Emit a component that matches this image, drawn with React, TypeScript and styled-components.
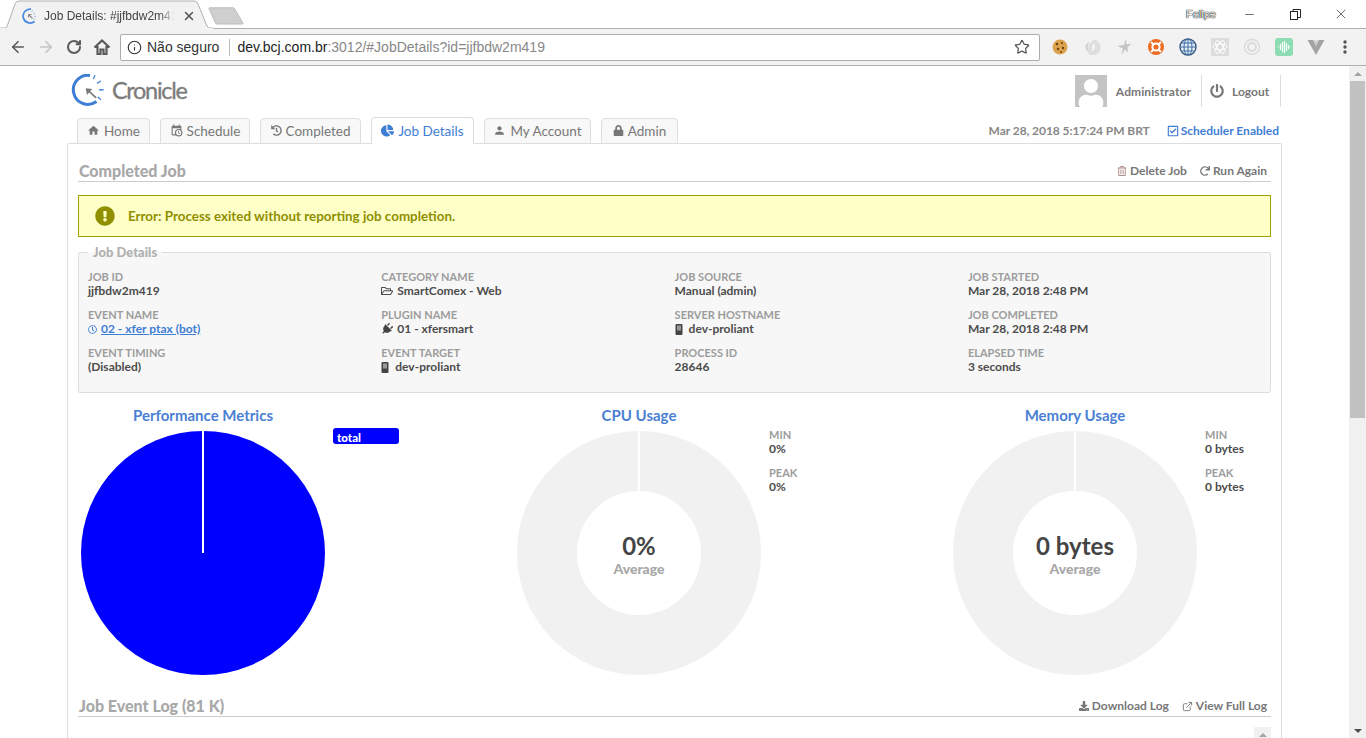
import React from 'react';
import styled, { createGlobalStyle } from 'styled-components';
import { MdHome, MdPerson } from 'react-icons/md';
import {
  FaHistory, FaChartPie, FaLock, FaRegTrashAlt, FaRedo, FaDownload, FaRegCheckSquare,
  FaRegFolderOpen, FaPlug, FaRegClock, FaPowerOff, FaExclamationCircle, FaUser,
} from 'react-icons/fa';
import { FiExternalLink } from 'react-icons/fi';
import { Star, Info, ArrowLeft, ArrowRight, RotateCw, Minus, X } from 'lucide-react';

const Global = createGlobalStyle`
  html, body { margin: 0; padding: 0; height: 738px; overflow: hidden; background: #fff; }
  * { box-sizing: border-box; }
  body { font-family: "Lato", "Liberation Sans", sans-serif; }
`;

const Shell = styled.div`width: 1366px; height: 738px; display: flex; flex-direction: column; overflow: hidden;`;

/* browser chrome */
const TabStrip = styled.div`
  height: 29px; background: #fff; border-bottom: 1px solid #b0b0b0; display: flex; align-items: flex-start;
  position: relative; flex: none;
`;
const BrowserTab = styled.div`
  position: relative; z-index: 1; width: 213px; height: 29px; display: flex; align-items: center; padding: 2px 0 0 22px;
  font: 12px "Liberation Sans", sans-serif; color: #444; flex: none;
`;
const TabShape = styled.svg`position: absolute; left: 0; top: 0;`;
const TabTitle = styled.span`
  position: relative; margin-left: 6px; width: 131px; overflow: hidden; white-space: nowrap;
  mask-image: linear-gradient(to right, #000 88%, transparent 100%);
`;
const TabFavicon = styled.svg`position: relative; flex: none;`;
const TabClose = styled(X)`position: relative; margin-left: 7px; color: #555;`;
const NewTab = styled.svg`margin: 7px 0 0 -5px; flex: none;`;
const WindowControls = styled.div`margin-left: auto; display: flex; align-items: center; height: 28px; padding-right: 2px;`;
const UserName = styled.span`
  font: 11px "Liberation Sans", sans-serif; color: #f2f2f2; margin-right: 10px;
  text-shadow: 0 0 1px #222, 0 0 1px #222, 0 0 1px #222;
`;
const WinButton = styled.div`width: 46px; height: 28px; display: flex; align-items: center; justify-content: center; color: #222;`;

const Toolbar = styled.div`
  height: 37px; background: #f2f2f2; border-bottom: 1px solid #b0b0b0; display: flex; align-items: center; flex: none;
  padding-left: 4px;
`;
const NavBtn = styled.div<{ $dim?: boolean }>`
  width: 28px; height: 28px; display: flex; align-items: center; justify-content: center;
  color: ${p => (p.$dim ? '#c4c4c4' : '#5a5a5a')};
`;
const Omnibox = styled.div`
  width: 920px; height: 27px; margin-left: 4px; background: #fff; border: 1px solid #ababab; border-radius: 2px; flex: none;
  display: flex; align-items: center; padding: 0 9px 0 6px; font: 14px "Liberation Sans", "Roboto", sans-serif; color: #333;
`;
const NotSecure = styled.span`margin-left: 5px; padding-right: 10px; border-right: 1px solid #bbb; line-height: 17px;`;
const Url = styled.span`margin-left: 7px; color: #222;`;
const UrlDim = styled.span`color: #888;`;
const StarIcon = styled(Star)`margin-left: auto; color: #555;`;
const Extensions = styled.div`display: flex; align-items: center; gap: 14px; margin-left: 11px; flex: none;`;
const ExtIcon = styled.svg`flex: none;`;
const Kebab = styled.svg`margin-left: 18px; flex: none; display: block;`;

/* page */
const Viewport = styled.div`flex: 1; display: flex; min-height: 0; background: #fff;`;
const Page = styled.div`flex: 1; padding-left: 67px; overflow: hidden;`;
const Scrollbar = styled.div`width: 17px; background: #f1f1f1; display: flex; flex-direction: column; align-items: center;`;
const ScrollArrow = styled.div<{ $down?: boolean }>`
  width: 0; height: 0; flex: none; margin: 6px 0 5px; border-left: 4px solid transparent; border-right: 4px solid transparent;
  ${p => (p.$down ? 'border-top: 4px solid #505050;' : 'border-bottom: 4px solid #a3a3a3;')}
`;
const ScrollThumb = styled.div`width: 15px; height: 337px; background: #c1c1c1; flex: none;`;
const ScrollGap = styled.div`flex: 1;`;

const Container = styled.div`width: 1215px;`;
const Header = styled.div`height: 51px; display: flex; align-items: flex-start; padding: 9px 1px 0 3px;`;
const LogoWrap = styled.div`display: flex; align-items: center; height: 32px;`;
const LogoText = styled.span`font-size: 23.5px; font-weight: 400; color: #7c7c7c; letter-spacing: -1.3px; margin: -2px 0 0 7px; -webkit-text-stroke: 0.35px #7c7c7c;`;
const HeaderRight = styled.div`margin-left: auto; display: flex; align-items: stretch; height: 32px; color: #777; font-size: 12px; font-weight: 700;`;
const Avatar = styled.div`width: 32px; height: 32px; background: #c4c4c4; display: flex; align-items: flex-end; justify-content: center; overflow: hidden; color: #fff;`;
const AdminName = styled.div`display: flex; align-items: center; padding: 0 10px 0 9px; border-right: 1px solid #ddd; letter-spacing: 0.1px;`;
const LogoutBox = styled.div`display: flex; align-items: center; gap: 8px; width: 79px; padding-left: 8px; border-right: 1px solid #ddd;`;
const Nav = styled.div`height: 27px; display: flex; align-items: flex-end; padding-left: 10px; position: relative; z-index: 1;`;
const Tab = styled.div<{ $active?: boolean; $w: number }>`
  height: ${p => (p.$active ? '27px' : '26px')}; display: flex; align-items: center; justify-content: center; gap: 4px; padding-bottom: 1px;
  width: ${p => p.$w}px; margin-right: 10px; font-size: 13.5px; font-weight: 400;
  color: ${p => (p.$active ? '#3f7ed5' : '#777')};
  background: ${p => (p.$active ? '#fff' : '#f8f8f8')};
  border: 1px solid #ddd; border-bottom: ${p => (p.$active ? 'none' : '1px solid #ddd')}; border-radius: 4px 4px 0 0;
`;
const NavRight = styled.div`margin-left: auto; display: flex; align-items: center; align-self: center; height: 24px; font-size: 12px; font-weight: 700; color: #888; padding-right: 3px;`;
const Clock = styled.span`margin-right: 17px; letter-spacing: -0.07px;`;
const SchedulerLink = styled.span`display: flex; align-items: center; gap: 2px; color: #3f7ed5;`;

const Panel = styled.div`
  border: 1px solid #ddd; border-bottom: none; border-radius: 2px 2px 0 0; height: 595px; padding: 0 10px 0 10px; margin-top: -1px; background: #fff;
`;
const SectionTitle = styled.div<{ $top: number }>`
  margin-top: ${p => p.$top}px; height: 27px; padding: 6px 4px 0 1px; border-bottom: 1px solid #ccc; display: flex; align-items: center; justify-content: space-between;
  color: #a8a8a8; font-size: 16px; font-weight: 900; line-height: 18px;
`;
const TitleActions = styled.div`display: flex; gap: 13px; font-size: 12px; font-weight: 700; color: #777;`;
const Action = styled.span`display: flex; align-items: center; gap: 3px;`;
const ActionIconTrash = styled(FaRegTrashAlt)`color: #b08a8a;`;

const Message = styled.div`
  margin-top: 13px; height: 42px; border: 1px solid #a0a000; background: #ffffc8; color: #8f8f00; font-size: 13.4px; font-weight: 700;
  display: flex; align-items: center; padding: 0 0 1px 16px; gap: 13px;
`;
const FieldBox = styled.div`
  position: relative; margin-top: 15px; height: 141px; background: #f7f7f7; border: 1px solid #ddd; border-radius: 2px;
  display: grid; grid-template-columns: repeat(4, 293.3px); padding: 17px 0 0 9px;
`;
const Legend = styled.span`
  position: absolute; left: 9px; top: -9px; padding: 0 5px; background: linear-gradient(#fff 50%, #f7f7f7 50%);
  font-size: 13px; font-weight: 900; color: #b0b0b0; line-height: 16px;
`;
const Column = styled.div`display: flex; flex-direction: column; gap: 10px;`;
const Field = styled.div`height: 28px; line-height: 14px;`;
const FieldLabel = styled.div`font-size: 11px; font-weight: 700; color: #9c9c9c; letter-spacing: 0;`;
const FieldValue = styled.div`font-size: 12px; font-weight: 700; color: #4c4c4c; display: flex; align-items: center; gap: 4px; white-space: nowrap;`;
const FieldLink = styled.span`color: #3f7ed5; text-decoration: underline; font-size: 12px; font-weight: 700;`;
const ClockIcon = styled(FaRegClock)`color: #3f7ed5;`;
const PlugIcon = styled(FaPlug)`transform: rotate(45deg); color: #444;`;
const ServerSvg = styled.svg`margin-right: 2px;`;

const Charts = styled.div`display: grid; grid-template-columns: repeat(3, 436px); margin-top: 12px; padding-left: 3px;`;
const ChartCell = styled.div`display: flex; flex-direction: column;`;
const ChartTitle = styled.div`width: 244px; text-align: center; color: #4a7fd3; font-size: 15px; font-weight: 700; line-height: 20px; height: 26px; white-space: nowrap;`;
const ChartBody = styled.div`display: flex; gap: 8px;`;
const Canvas = styled.div`position: relative; width: 244px; height: 244px; flex: none;`;
const ChartSvg = styled.svg`display: block;`;
const CenterText = styled.div`
  position: absolute; left: 0; right: 0; top: 100px; text-align: center; color: #444; font-size: 24px; font-weight: 700; line-height: 29px;
`;
const CenterSub = styled.div`font-size: 14px; font-weight: 900; color: #a8a8a8; line-height: 18px;`;
const LegendChip = styled.div`
  margin-top: -3px; width: 66px; height: 16px; background: #0000ff; border-radius: 3px; color: #fff; font-size: 11.5px; font-weight: 900; padding-left: 4px; line-height: 19px;
`;
const SideStats = styled.div`display: flex; flex-direction: column; gap: 10px; margin-top: -3px;`;

const LogBody = styled.div`display: flex; justify-content: flex-end; margin-top: 10px;`;
const LogScroll = styled.div`width: 17px; height: 20px; background: #f1f1f1; display: flex; justify-content: center;`;

const tabs = [
  { label: 'Home', w: 73, icon: <MdHome size={13} /> },
  { label: 'Schedule', w: 90, icon: <svg width="13" height="13" viewBox="0 0 24 24" fill="currentColor"><path d="M15,13H16.5V15.82L18.94,17.23L18.19,18.53L15,16.69V13M19,8H5V19H9.67C9.24,18.09 9,17.07 9,16A7,7 0 0,1 16,9C17.07,9 18.09,9.24 19,9.67V8M5,21C3.89,21 3,20.1 3,19V5C3,3.89 3.89,3 5,3H6V1H8V3H16V1H18V3H19A2,2 0 0,1 21,5V11.1C22.24,12.36 23,14.09 23,16A7,7 0 0,1 16,23C14.09,23 12.36,22.24 11.1,21H5M16,11.15A4.85,4.85 0 0,0 11.15,16C11.15,18.68 13.32,20.85 16,20.85A4.85,4.85 0 0,0 20.85,16C20.85,13.32 18.68,11.15 16,11.15Z" /></svg> },
  { label: 'Completed', w: 101, icon: <FaHistory size={11} /> },
  { label: 'Job Details', w: 103, icon: <FaChartPie size={13} />, active: true },
  { label: 'My Account', w: 107, icon: <MdPerson size={13} /> },
  { label: 'Admin', w: 77, icon: <FaLock size={11} /> },
];

const ServerIcon = () => (
  <ServerSvg width="8" height="11" viewBox="0 0 8 11"><rect x="0.5" y="0" width="7" height="11" rx="1" fill="#444" /><rect x="2" y="1.5" width="4" height="5" fill="#999" /></ServerSvg>
);

const columns: { label: string; value: React.ReactNode }[][] = [
  [
    { label: 'JOB ID', value: 'jjfbdw2m419' },
    { label: 'EVENT NAME', value: <><ClockIcon size={9} /><FieldLink>02 - xfer ptax (bot)</FieldLink></> },
    { label: 'EVENT TIMING', value: '(Disabled)' },
  ],
  [
    { label: 'CATEGORY NAME', value: <><FaRegFolderOpen size={12} />SmartComex - Web</> },
    { label: 'PLUGIN NAME', value: <><PlugIcon size={12} />01 - xfersmart</> },
    { label: 'EVENT TARGET', value: <><ServerIcon />dev-proliant</> },
  ],
  [
    { label: 'JOB SOURCE', value: 'Manual (admin)' },
    { label: 'SERVER HOSTNAME', value: <><ServerIcon />dev-proliant</> },
    { label: 'PROCESS ID', value: '28646' },
  ],
  [
    { label: 'JOB STARTED', value: 'Mar 28, 2018 2:48 PM' },
    { label: 'JOB COMPLETED', value: 'Mar 28, 2018 2:48 PM' },
    { label: 'ELAPSED TIME', value: '3 seconds' },
  ],
];

const Donut = ({ value }: { value: string }) => (
  <Canvas>
    <ChartSvg width="244" height="244" viewBox="0 0 244 244">
      <circle cx="122" cy="122" r="92" fill="none" stroke="#f1f1f1" strokeWidth="60" />
      <line x1="122" y1="0" x2="122" y2="62" stroke="#fff" strokeWidth="2" />
    </ChartSvg>
    <CenterText>
      {value}
      <CenterSub>Average</CenterSub>
    </CenterText>
  </Canvas>
);

const Stats = ({ min, peak }: { min: string; peak: string }) => (
  <SideStats>
    <Field><FieldLabel>MIN</FieldLabel><FieldValue>{min}</FieldValue></Field>
    <Field><FieldLabel>PEAK</FieldLabel><FieldValue>{peak}</FieldValue></Field>
  </SideStats>
);

export default function App() {
  return (
    <Shell>
      <Global />
      <TabStrip>
        <BrowserTab>
          <TabShape width="213" height="29" viewBox="0 0 213 29">
            <path d="M0 28 L5 28 Q6.5 28 7.2 26 L15 4 Q16 1 19 1 L194 1 Q197 1 198 4 L207 26 Q208 28 210 28 L213 28 V29 H0 Z" fill="#f2f2f2" stroke="#b0b0b0" />
            <rect x="0" y="28" width="213" height="2" fill="#f2f2f2" />
          </TabShape>
          <TabFavicon width="16" height="16" viewBox="0 0 16 16">
            <path d="M12.5 13.5 A7 7 0 1 1 9 1.1" fill="none" stroke="#4a8ae0" strokeWidth="1.8" />
            <path d="M10.5 2.5 L9.8 4 M13 5.2 L11.6 6 M14 8.3 L12.4 8.3 M13 11.5 L11.6 10.7" stroke="#8fb0d8" strokeWidth="1" fill="none" />
            <path d="M6.5 6.5 L10.5 10.5 M6.5 6.5 L6.5 9.5 M6.5 6.5 L9.5 6.5" stroke="#888" strokeWidth="1.1" fill="none" />
          </TabFavicon>
          <TabTitle>Job Details: #jjfbdw2m419</TabTitle>
          <TabClose size={14} strokeWidth={2.6} />
        </BrowserTab>
        <NewTab width="36" height="18" viewBox="0 0 36 18">
          <path d="M1.5 0.8 L25 0.8 Q26 0.8 26.5 1.6 L35 16.2 Q35.3 17 34.5 17 L9 17 Q8 17 7.5 16 L1 1.6 Q0.8 0.8 1.5 0.8 Z" fill="#cfcfcf" stroke="#bcbcbc" />
        </NewTab>
        <WindowControls>
          <UserName>Felipe</UserName>
          <WinButton><Minus size={13} strokeWidth={1.2} /></WinButton>
          <WinButton>
            <svg width="11" height="11" viewBox="0 0 11 11" fill="none" stroke="#222"><rect x="0.5" y="2.5" width="7" height="8" /><path d="M3 2.5V0.5H10.5V8.5H7.5" /></svg>
          </WinButton>
          <WinButton><X size={16} strokeWidth={1} /></WinButton>
        </WindowControls>
      </TabStrip>
      <Toolbar>
        <NavBtn><ArrowLeft size={18} strokeWidth={2.2} /></NavBtn>
        <NavBtn $dim><ArrowRight size={18} strokeWidth={2.2} /></NavBtn>
        <NavBtn><RotateCw size={16} strokeWidth={3} /></NavBtn>
        <NavBtn>
          <svg width="18" height="18" viewBox="0 0 18 18" fill="none" stroke="#5a5a5a" strokeWidth="2.2"><path d="M1.5 9.5 L9 2.5 L16.5 9.5 M4.5 8 V16 H7.5 V11.5 H10.5 V16 H13.5 V8" /></svg>
        </NavBtn>
        <Omnibox>
          <Info size={15} strokeWidth={1.8} />
          <NotSecure>Não seguro</NotSecure>
          <Url>dev.bcj.com.br<UrlDim>:3012/#JobDetails?id=jjfbdw2m419</UrlDim></Url>
          <StarIcon size={16} strokeWidth={1.8} />
        </Omnibox>
        <Extensions>
          <ExtIcon width="18" height="18" viewBox="0 0 18 18"><circle cx="9" cy="9" r="7.5" fill="#dca24c" /><g fill="#6b4018"><circle cx="6" cy="6" r="1.2" /><circle cx="11" cy="5" r="1" /><circle cx="12" cy="10" r="1.2" /><circle cx="7" cy="11" r="1.2" /><circle cx="10" cy="14" r="0.9" /></g></ExtIcon>
          <ExtIcon width="18" height="18" viewBox="0 0 18 18"><path d="M11 1.5 A7.8 7.8 0 1 1 6 16 Q2 9 11 1.5 Z" fill="#dedede" /><path d="M7 4 Q3 9 6 14 Q2 12 2.5 8 Q3 5 7 4 Z" fill="#d0d0d0" /><path d="M11 5 Q8 9 9.5 13.5 Q13 10 11 5 Z" fill="#f7f7f7" /></ExtIcon>
          <ExtIcon width="18" height="18" viewBox="0 0 18 18"><path d="M11 1 L11.5 6.5 L16.5 5.5 L12.5 9.5 L13 14.5 L10 11.5 L6.5 17 L7.8 10.5 L2.5 8 L8.8 7 Z" fill="#c4c4c4" /></ExtIcon>
          <ExtIcon width="18" height="18" viewBox="0 0 18 18"><circle cx="9" cy="9" r="8" fill="#ee6c22" /><circle cx="9" cy="9" r="3.6" fill="none" stroke="#fff" strokeWidth="2" /><path d="M4 4 L7 7 M14 4 L11 7 M4 14 L7 11 M14 14 L11 11" stroke="#fff" strokeWidth="2" /></ExtIcon>
          <ExtIcon width="18" height="18" viewBox="0 0 18 18" fill="none"><circle cx="9" cy="9" r="8" fill="#e6edf5" stroke="#3c5a80" strokeWidth="1.4" /><path d="M1 9H17 M9 1V17 M2.5 5H15.5 M2.5 13H15.5" stroke="#3c6ea8" /><ellipse cx="9" cy="9" rx="4" ry="8" stroke="#3c6ea8" /></ExtIcon>
          <ExtIcon width="18" height="18" viewBox="0 0 18 18" fill="none"><rect width="18" height="18" fill="#dcdcdc" /><g stroke="#fff"><ellipse cx="9" cy="9" rx="7" ry="3" /><ellipse cx="9" cy="9" rx="7" ry="3" transform="rotate(60 9 9)" /><ellipse cx="9" cy="9" rx="7" ry="3" transform="rotate(120 9 9)" /></g></ExtIcon>
          <ExtIcon width="18" height="18" viewBox="0 0 18 18" fill="none" stroke="#dadada"><circle cx="9" cy="9" r="7.5" strokeWidth="1.4" /><circle cx="9" cy="9" r="4" strokeWidth="2" /></ExtIcon>
          <ExtIcon width="18" height="18" viewBox="0 0 18 18"><rect width="18" height="18" rx="3" fill="#8edcb4" /><path d="M3 9H4 M5.5 6V12 M7.5 4V14 M9.5 3V15 M11.5 5V13 M13.5 7V11 M15 9H15.5" stroke="#fff" strokeWidth="1.2" /></ExtIcon>
          <ExtIcon width="18" height="18" viewBox="0 0 18 18"><path d="M0.5 2H6L9 8L12 2H17.5L9 17Z" fill="#a3a3a3" /><path d="M6 2L9 8L12 2H10L9 4L8 2Z" fill="#c9c9c9" /></ExtIcon>
        </Extensions>
        <Kebab width="4" height="14" viewBox="0 0 4 14" fill="#555"><circle cx="2" cy="2" r="1.7" /><circle cx="2" cy="7" r="1.7" /><circle cx="2" cy="12" r="1.7" /></Kebab>
      </Toolbar>
      <Viewport>
        <Page>
          <Container>
            <Header>
              <LogoWrap>
                <svg width="35" height="34" viewBox="0 0 35 34" fill="none">
                  <path d="M26.5 27.5 A14.5 14.5 0 1 1 20 1.5" stroke="#3f7ed5" strokeWidth="3" />
                  <path d="M25 1 L23.3 5 M31 7 L27 9.3 M33.7 15.7 L29 15.7 M31 25.7 L27.7 23" stroke="#4f8ad8" strokeWidth="1.4" />
                  <path d="M15.7 14.3 L22.3 15 L20.2 17.2 L26.7 23.2 L25.6 24.4 L19.2 18.4 L17 21 Z" fill="#7a7a7a" />
                </svg>
                <LogoText>Cronicle</LogoText>
              </LogoWrap>
              <HeaderRight>
                <Avatar><FaUser size={28} /></Avatar>
                <AdminName>Administrator</AdminName>
                <LogoutBox><FaPowerOff size={14} />Logout</LogoutBox>
              </HeaderRight>
            </Header>
            <Nav>
              {tabs.map(t => (
                <Tab key={t.label} $w={t.w} $active={t.active}>{t.icon}{t.label}</Tab>
              ))}
              <NavRight>
                <Clock>Mar 28, 2018 5:17:24 PM BRT</Clock>
                <SchedulerLink><FaRegCheckSquare size={12} />Scheduler Enabled</SchedulerLink>
              </NavRight>
            </Nav>
            <Panel>
              <SectionTitle $top={11}>
                Completed Job
                <TitleActions>
                  <Action><ActionIconTrash size={10} />Delete Job</Action>
                  <Action><FaRedo size={10} />Run Again</Action>
                </TitleActions>
              </SectionTitle>
              <Message>
                <FaExclamationCircle size={20} />
                Error: Process exited without reporting job completion.
              </Message>
              <FieldBox>
                <Legend>Job Details</Legend>
                {columns.map((col, i) => (
                  <Column key={i}>
                    {col.map(f => (
                      <Field key={f.label}>
                        <FieldLabel>{f.label}</FieldLabel>
                        <FieldValue>{f.value}</FieldValue>
                      </Field>
                    ))}
                  </Column>
                ))}
              </FieldBox>
              <Charts>
                <ChartCell>
                  <ChartTitle>Performance Metrics</ChartTitle>
                  <ChartBody>
                    <Canvas>
                      <ChartSvg width="244" height="244" viewBox="0 0 244 244">
                        <circle cx="122" cy="122" r="122" fill="#0000ff" />
                        <line x1="122" y1="0" x2="122" y2="122" stroke="#fff" strokeWidth="2" />
                      </ChartSvg>
                    </Canvas>
                    <LegendChip>total</LegendChip>
                  </ChartBody>
                </ChartCell>
                <ChartCell>
                  <ChartTitle>CPU Usage</ChartTitle>
                  <ChartBody>
                    <Donut value="0%" />
                    <Stats min="0%" peak="0%" />
                  </ChartBody>
                </ChartCell>
                <ChartCell>
                  <ChartTitle>Memory Usage</ChartTitle>
                  <ChartBody>
                    <Donut value="0 bytes" />
                    <Stats min="0 bytes" peak="0 bytes" />
                  </ChartBody>
                </ChartCell>
              </Charts>
              <SectionTitle $top={15}>
                Job Event Log (81 K)
                <TitleActions>
                  <Action><FaDownload size={10} />Download Log</Action>
                  <Action><FiExternalLink size={11} />View Full Log</Action>
                </TitleActions>
              </SectionTitle>
              <LogBody>
                <LogScroll><ScrollArrow /></LogScroll>
              </LogBody>
            </Panel>
          </Container>
        </Page>
        <Scrollbar>
          <ScrollArrow />
          <ScrollThumb />
          <ScrollGap />
          <ScrollArrow $down />
        </Scrollbar>
      </Viewport>
    </Shell>
  );
}
